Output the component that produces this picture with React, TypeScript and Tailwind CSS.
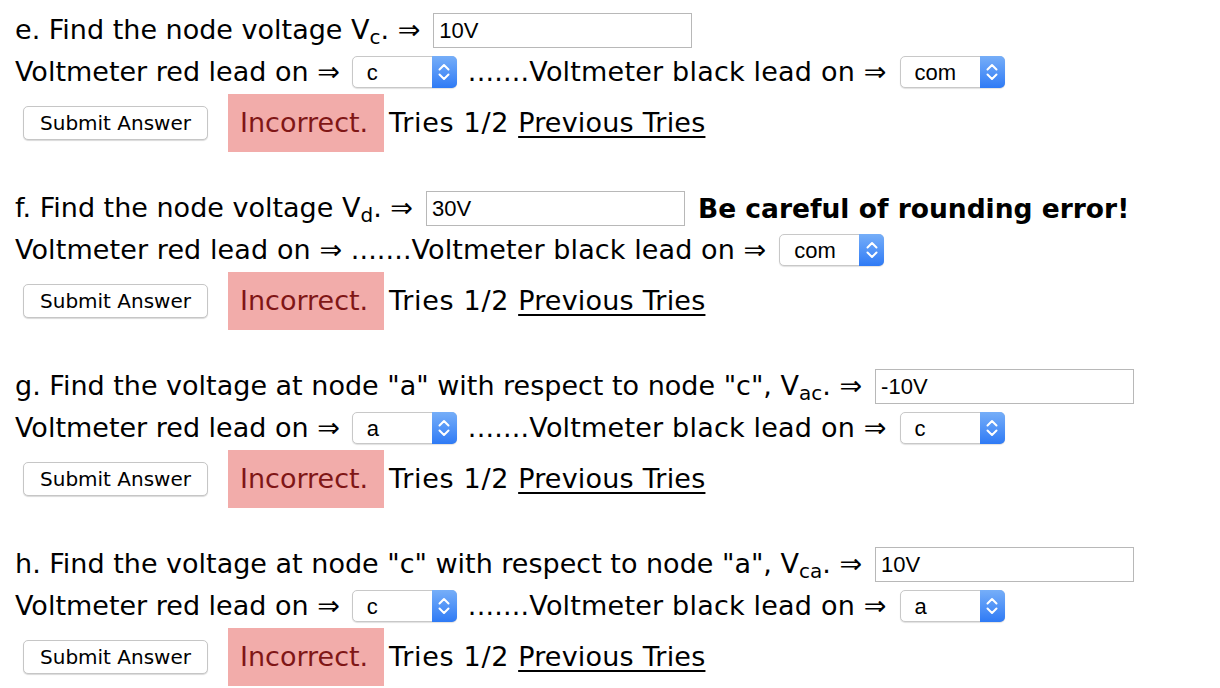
import React from "react";

const Chevrons = () => (
  <svg width="14" height="24" viewBox="0 0 14 24" fill="none">
    <path d="M2.5 9.5 L7 5 L11.5 9.5" stroke="white" strokeWidth="2" strokeLinecap="round" strokeLinejoin="round" />
    <path d="M2.5 14.5 L7 19 L11.5 14.5" stroke="white" strokeWidth="2" strokeLinecap="round" strokeLinejoin="round" />
  </svg>
);

const Select = ({ value, className = "" }: { value: string; className?: string }) => (
  <div
    className={`flex h-[32px] w-[105px] items-stretch rounded-[5px] border border-[#c8c8c8] bg-white shadow-[0_1px_1px_rgba(0,0,0,0.12)] ${className}`}
  >
    <span className="flex flex-1 items-center pl-[14px] font-['Liberation_Sans',sans-serif] text-[22px] text-black">
      {value}
    </span>
    <span className="-my-px -mr-px flex w-[25px] items-center justify-center rounded-r-[5px] bg-gradient-to-b from-[#76aef8] to-[#2e7af5]">
      <Chevrons />
    </span>
  </div>
);

const Answer = ({ value }: { value: string }) => (
  <input
    readOnly
    value={value}
    className="ml-[13px] h-[35px] w-[259px] border border-[#b8b8b8] px-[5px] font-['Liberation_Sans',sans-serif] text-[22px] text-black outline-none"
  />
);

const Feedback = () => (
  <div className="flex h-[58px] items-center">
    <button className="ml-[8px] h-[34px] w-[185px] rounded-[5px] border border-[#c6c6c6] bg-white text-[20px] text-black shadow-[0_1px_1px_rgba(0,0,0,0.15)]">
      Submit Answer
    </button>
    <div className="ml-[20px] flex h-[58px] w-[156px] items-center pl-[12px] bg-[#f2acaa] text-[#7f1616]">
      Incorrect.
    </div>
    <span className="ml-[5px] tracking-[0.7px]">Tries 1/2</span>
    <span className="ml-[9px] tracking-[0.2px] underline decoration-[2px] underline-offset-[4px]">Previous Tries</span>
  </div>
);

type Part = {
  letter: string;
  question: React.ReactNode;
  value: string;
  note?: string;
  red?: string;
  black: string;
};

const parts: Part[] = [
  {
    letter: "e",
    question: (
      <>
        Find the node voltage V<sub className="text-[20px]">c</sub>.
      </>
    ),
    value: "10V",
    red: "c",
    black: "com",
  },
  {
    letter: "f",
    question: (
      <>
        Find the node voltage V<sub className="text-[20px]">d</sub>.
      </>
    ),
    value: "30V",
    note: "Be careful of rounding error!",
    black: "com",
  },
  {
    letter: "g",
    question: (
      <>
        Find the voltage at node "a" with respect to node "c", V<sub className="text-[20px]">ac</sub>.
      </>
    ),
    value: "-10V",
    red: "a",
    black: "c",
  },
  {
    letter: "h",
    question: (
      <>
        Find the voltage at node "c" with respect to node "a", V<sub className="text-[20px]">ca</sub>.
      </>
    ),
    value: "10V",
    red: "c",
    black: "a",
  },
];

export default function App() {
  return (
    <div className="flex flex-col gap-[39px] bg-white pl-[15px] pt-[13px] font-['DejaVu_Sans',sans-serif] text-[27px] text-black">
      {parts.map((p) => (
        <div key={p.letter} className="flex flex-col">
          {/* question + answer box */}
          <div className="flex h-[35px] items-center whitespace-nowrap">
            <span>
              {p.letter}. {p.question} ⇒
            </span>
            <Answer value={p.value} />
            {p.note && <span className="ml-[13px] text-[26.5px] font-bold">{p.note}</span>}
          </div>

          {/* voltmeter leads */}
          <div className="mt-[8px] flex h-[32px] items-center whitespace-nowrap">
            {p.red ? (
              <>
                <span>Voltmeter red lead on ⇒</span>
                <Select value={p.red} className="ml-[12px]" />
                <span className="ml-[11px] tracking-[0.2px]">.......Voltmeter black lead on ⇒</span>
              </>
            ) : (
              <span className="tracking-[0.1px]">Voltmeter red lead on ⇒ .......Voltmeter black lead on ⇒</span>
            )}
            <Select value={p.black} className="ml-[13px]" />
          </div>

          {/* submit + status */}
          <div className="mt-[6px] whitespace-nowrap">
            <Feedback />
          </div>
        </div>
      ))}
    </div>
  );
}
